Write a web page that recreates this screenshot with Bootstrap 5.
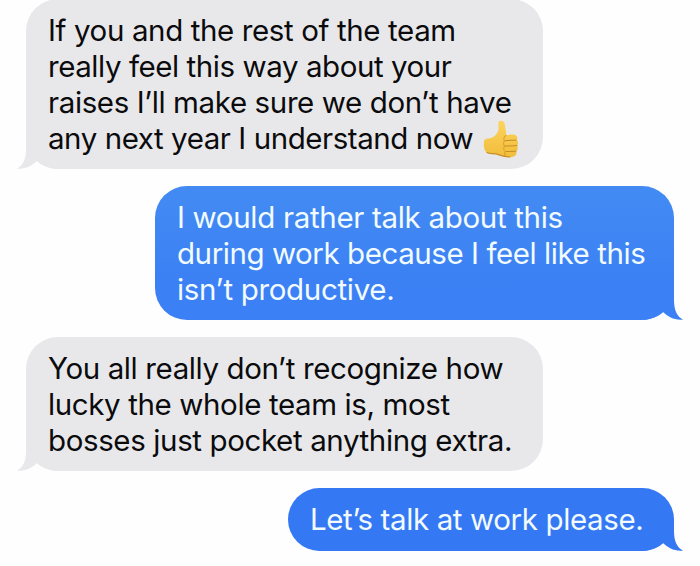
<!doctype html>
<html lang="en">
<head>
    <meta charset="utf-8">
    <title>Messages</title>
    <meta name="viewport" content="width=device-width, initial-scale=1">

    <!-- Bootstrap 5 CDN -->
    <link href="https://cdn.jsdelivr.net/npm/bootstrap@5.3.3/dist/css/bootstrap.min.css" rel="stylesheet">

    <style>
        body {
            height: 566px;
            overflow: hidden;
            background-color: #fefefe;
            font-family: Inter, "Liberation Sans", sans-serif;
            font-size: 29.5px;
            line-height: 36px;
            letter-spacing: -0.38px;
        }
        .thread {
            gap: 17px;
            margin-top: -1px;
            padding: 0 26px;
        }
        .bubble {
            padding: 13px 22px;
            border-radius: 32px;
            white-space: nowrap;
        }
        .received {
            width: 517px;
            color: #0b0b0d;
            background-color: #e8e8ea;
            --tail: #e8e8ea;
        }
        .sent {
            color: #f2fbff;
        }
        .sent-long {
            width: 519px;
            background: linear-gradient(#438bf3, #3b80f4 75%);
            --tail: #3b80f4;
        }
        .sent-short {
            width: 386px;
            padding-bottom: 14px;
            background-color: #3578f4;
            --tail: #3578f4;
        }
        .tail {
            bottom: 0;
            width: 40px;
            height: 40px;
            fill: var(--tail);
        }
        .received .tail {
            left: -9px;
        }
        .sent .tail {
            right: -9px;
            transform: scaleX(-1);
        }
        .thumb {
            width: 36px;
            height: 40px;
            margin: 0 0 -4px 10px;
        }
        /* tracking by line */
        .tight {
            letter-spacing: -0.44px;
        }
        .loose {
            letter-spacing: -0.32px;
        }
    </style>
</head>
<body>
<svg class="d-none">
    <symbol id="tail" viewBox="0 0 40 40">
        <path d="M9 8V20C9 30 6 37 0 39.5C8 40.500 15 37 20 32C25 36 31 39.500 40 40L20 12Z"/>
    </symbol>
</svg>

<main class="thread d-flex flex-column">
    <div class="bubble received position-relative align-self-start">
        <svg class="tail position-absolute"><use href="#tail"/></svg>
        <div class="position-relative">
            <div>If you and the rest of the team</div>
            <div class="tight">really feel this way about your</div>
            <div>raises I’ll make sure we don’t have</div>
            <div class="tight d-flex">any next year I understand now
                <svg class="thumb" viewBox="0 0 36 40" role="img" aria-label="Thumbs up">
                    <defs>
                        <linearGradient id="skin" x1="0" y1="0" x2="0" y2="1">
                            <stop offset="0" stop-color="#fbd45c"/>
                            <stop offset="1" stop-color="#f2bd3c"/>
                        </linearGradient>
                    </defs>
                    <path fill="url(#skin)" d="M15.500 3C15.500 1.200 17 .5 18.500 .8C20.500 1.200 21.500 2.600 21.800 4.500L23.500 15.500C25 14.600 29.500 14.200 32 15C34.500 15.800 35 18.500 33.500 20C35.500 21 35.700 24.300 34.200 25.500C35.300 27 35 30 33.200 31C34 33 33.200 35.800 30.500 36.600C26.500 37.700 21 37 17.500 35.500C14.500 34.200 12.500 33.600 9 33.800C6.500 34 4 33 2.800 31.500C.8 29 .2 23.500 1.300 20.500C2.200 18.300 5 18.800 8 18C11.500 17 14.500 13.500 15.500 10Z"/>
                    <path fill="none" stroke="#c58d25" stroke-width="1" stroke-linecap="round" d="M22.500 20.600C26 20 30 20.600 33.300 20.200M22 26C26 25.700 30 26.200 33.800 25.600M22.500 31.500C26 31.300 30 31.700 33 31.200"/>
                    <path fill="none" stroke="#dda32f" stroke-width="1.100" stroke-linecap="round" d="M23.300 15.600C20.500 16.500 19.800 19.500 22 20.800C20 22 20 24.800 21.800 26C20.300 27.500 20.500 30.500 22.300 31.600C21.300 33 21.500 35 23 36.500"/>
                    <path fill="none" stroke="#c98d28" stroke-width="1.200" stroke-linecap="round" d="M4 32.600C7 34.300 10 33 13 33.900C17 35.200 21 37.100 27 37"/>
                </svg>
            </div>
        </div>
    </div>

    <div class="bubble sent sent-long position-relative align-self-end">
        <svg class="tail position-absolute"><use href="#tail"/></svg>
        <div class="position-relative">
            <div class="loose">I would rather talk about this</div>
            <div class="tight">during work because I feel like this</div>
            <div class="loose">isn’t productive.</div>
        </div>
    </div>

    <div class="bubble received position-relative align-self-start">
        <svg class="tail position-absolute"><use href="#tail"/></svg>
        <div class="position-relative">
            <div>You all really don’t recognize how</div>
            <div>lucky the whole team is, most</div>
            <div>bosses just pocket anything extra.</div>
        </div>
    </div>

    <div class="bubble sent sent-short position-relative align-self-end">
        <svg class="tail position-absolute"><use href="#tail"/></svg>
        <div class="position-relative">Let’s talk at work please.</div>
    </div>
</main>

<script src="https://cdn.jsdelivr.net/npm/bootstrap@5.3.3/dist/js/bootstrap.bundle.min.js"></script>
</body>
</html>
